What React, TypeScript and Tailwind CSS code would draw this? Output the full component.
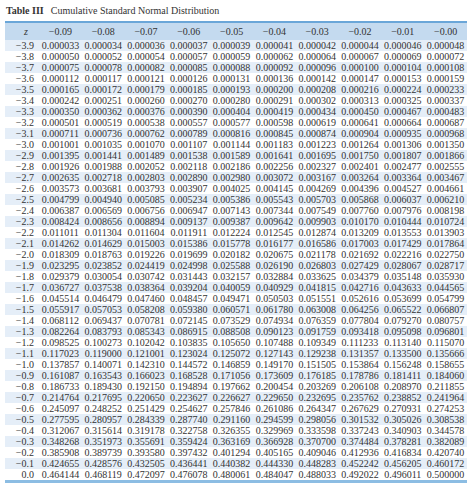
import React from "react";

const raw = `-3.9|0.000033 0.000034 0.000036 0.000037 0.000039 0.000041 0.000042 0.000044 0.000046 0.000048
-3.8|0.000050 0.000052 0.000054 0.000057 0.000059 0.000062 0.000064 0.000067 0.000069 0.000072
-3.7|0.000075 0.000078 0.000082 0.000085 0.000088 0.000092 0.000096 0.000100 0.000104 0.000108
-3.6|0.000112 0.000117 0.000121 0.000126 0.000131 0.000136 0.000142 0.000147 0.000153 0.000159
-3.5|0.000165 0.000172 0.000179 0.000185 0.000193 0.000200 0.000208 0.000216 0.000224 0.000233
-3.4|0.000242 0.000251 0.000260 0.000270 0.000280 0.000291 0.000302 0.000313 0.000325 0.000337
-3.3|0.000350 0.000362 0.000376 0.000390 0.000404 0.000419 0.000434 0.000450 0.000467 0.000483
-3.2|0.000501 0.000519 0.000538 0.000557 0.000577 0.000598 0.000619 0.000641 0.000664 0.000687
-3.1|0.000711 0.000736 0.000762 0.000789 0.000816 0.000845 0.000874 0.000904 0.000935 0.000968
-3.0|0.001001 0.001035 0.001070 0.001107 0.001144 0.001183 0.001223 0.001264 0.001306 0.001350
-2.9|0.001395 0.001441 0.001489 0.001538 0.001589 0.001641 0.001695 0.001750 0.001807 0.001866
-2.8|0.001926 0.001988 0.002052 0.002118 0.002186 0.002256 0.002327 0.002401 0.002477 0.002555
-2.7|0.002635 0.002718 0.002803 0.002890 0.002980 0.003072 0.003167 0.003264 0.003364 0.003467
-2.6|0.003573 0.003681 0.003793 0.003907 0.004025 0.004145 0.004269 0.004396 0.004527 0.004661
-2.5|0.004799 0.004940 0.005085 0.005234 0.005386 0.005543 0.005703 0.005868 0.006037 0.006210
-2.4|0.006387 0.006569 0.006756 0.006947 0.007143 0.007344 0.007549 0.007760 0.007976 0.008198
-2.3|0.008424 0.008656 0.008894 0.009137 0.009387 0.009642 0.009903 0.010170 0.010444 0.010724
-2.2|0.011011 0.011304 0.011604 0.011911 0.012224 0.012545 0.012874 0.013209 0.013553 0.013903
-2.1|0.014262 0.014629 0.015003 0.015386 0.015778 0.016177 0.016586 0.017003 0.017429 0.017864
-2.0|0.018309 0.018763 0.019226 0.019699 0.020182 0.020675 0.021178 0.021692 0.022216 0.022750
-1.9|0.023295 0.023852 0.024419 0.024998 0.025588 0.026190 0.026803 0.027429 0.028067 0.028717
-1.8|0.029379 0.030054 0.030742 0.031443 0.032157 0.032884 0.033625 0.034379 0.035148 0.035930
-1.7|0.036727 0.037538 0.038364 0.039204 0.040059 0.040929 0.041815 0.042716 0.043633 0.044565
-1.6|0.045514 0.046479 0.047460 0.048457 0.049471 0.050503 0.051551 0.052616 0.053699 0.054799
-1.5|0.055917 0.057053 0.058208 0.059380 0.060571 0.061780 0.063008 0.064256 0.065522 0.066807
-1.4|0.068112 0.069437 0.070781 0.072145 0.073529 0.074934 0.076359 0.077804 0.079270 0.080757
-1.3|0.082264 0.083793 0.085343 0.086915 0.088508 0.090123 0.091759 0.093418 0.095098 0.096801
-1.2|0.098525 0.100273 0.102042 0.103835 0.105650 0.107488 0.109349 0.111233 0.113140 0.115070
-1.1|0.117023 0.119000 0.121001 0.123024 0.125072 0.127143 0.129238 0.131357 0.133500 0.135666
-1.0|0.137857 0.140071 0.142310 0.144572 0.146859 0.149170 0.151505 0.153864 0.156248 0.158655
-0.9|0.161087 0.163543 0.166023 0.168528 0.171056 0.173609 0.176185 0.178786 0.181411 0.184060
-0.8|0.186733 0.189430 0.192150 0.194894 0.197662 0.200454 0.203269 0.206108 0.208970 0.211855
-0.7|0.214764 0.217695 0.220650 0.223627 0.226627 0.229650 0.232695 0.235762 0.238852 0.241964
-0.6|0.245097 0.248252 0.251429 0.254627 0.257846 0.261086 0.264347 0.267629 0.270931 0.274253
-0.5|0.277595 0.280957 0.284339 0.287740 0.291160 0.294599 0.298056 0.301532 0.305026 0.308538
-0.4|0.312067 0.315614 0.319178 0.322758 0.326355 0.329969 0.333598 0.337243 0.340903 0.344578
-0.3|0.348268 0.351973 0.355691 0.359424 0.363169 0.366928 0.370700 0.374484 0.378281 0.382089
-0.2|0.385908 0.389739 0.393580 0.397432 0.401294 0.405165 0.409046 0.412936 0.416834 0.420740
-0.1|0.424655 0.428576 0.432505 0.436441 0.440382 0.444330 0.448283 0.452242 0.456205 0.460172
0.0|0.464144 0.468119 0.472097 0.476078 0.480061 0.484047 0.488033 0.492022 0.496011 0.500000`;

const rows = raw.split("\n").map((line) => {
  const [z, vals] = line.split("|");
  return { z: z.replace("-", "\u2212"), vals: vals.split(" ") };
});

const headers = ["-0.09", "-0.08", "-0.07", "-0.06", "-0.05", "-0.04", "-0.03", "-0.02", "-0.01", "-0.00"].map((h) =>
  h.replace("-", "\u2212")
);

export default function App() {
  return (
    <div className="w-[474px] h-[492px] bg-white text-[#333] font-['Liberation_Serif',serif] overflow-hidden">
      <div className="pt-[4px] pl-[6px] text-[10px] leading-[14px] text-[#333]">
        <span className="font-bold">Table III</span>
        <span className="ml-[7px]">Cumulative Standard Normal Distribution</span>
      </div>
      <table className="mt-[3px] ml-[5px] w-[462px] table-fixed border-collapse text-[10px]">
        <colgroup>
          <col className="w-[34px]" />
          {headers.map((h) => (
            <col key={h} />
          ))}
        </colgroup>
        <thead>
          <tr className="bg-[#c4daef] border-t-2 border-[#6aa6d8]">
            <th className="h-[17px] font-normal italic text-center p-0 pl-[8px] leading-[17px]">z</th>
            {headers.map((h) => (
              <th key={h} className="h-[17px] font-normal text-center p-0 leading-[17px]">
                {h}
              </th>
            ))}
          </tr>
        </thead>
        <tbody className="border-b-[3px] border-[#8cbde3]">
          {rows.map((r, i) => (
            <tr key={r.z} className={i % 2 === 0 ? "bg-[#e5eef8]" : "bg-white"}>
              <td className="h-[11px] text-right p-0 pr-[5px] leading-[11px]">{r.z}</td>
              {r.vals.map((v, j) => (
                <td key={j} className="h-[11px] text-center p-0 leading-[11px]">
                  {v}
                </td>
              ))}
            </tr>
          ))}
        </tbody>
      </table>
    </div>
  );
}
